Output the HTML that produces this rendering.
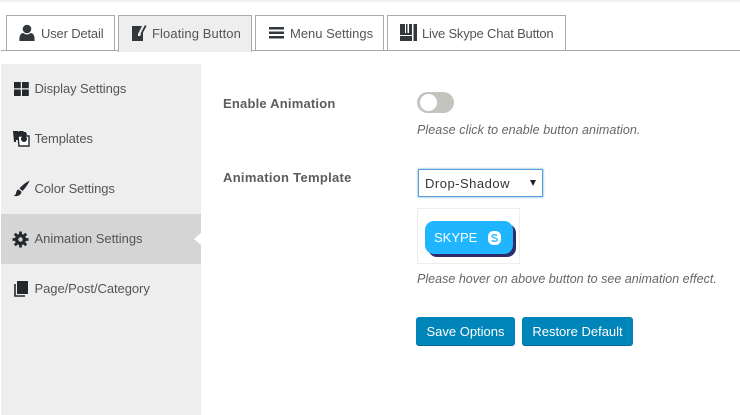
<!DOCTYPE html>
<html>
<head>
<meta charset="utf-8">
<style>
html,body{margin:0;padding:0;width:740px;height:415px;overflow:hidden;background:#fff;font-family:"Liberation Sans",sans-serif;color:#555}
.a{position:absolute;white-space:nowrap}
.tab{position:absolute;top:15px;height:34px;border:1px solid #aaa;border-bottom:none;box-sizing:content-box}
.t{position:absolute;white-space:nowrap;font-size:13px;line-height:18px;color:#555}
svg{position:absolute;display:block}
.btn{position:absolute;top:317px;height:28px;background:#0085ba;border-radius:3px;border-bottom:1px solid #006799;color:#fff;font-size:13px;line-height:29px;text-align:center}
.lab{position:absolute;font-size:13px;font-weight:bold;color:#5c5c5c;line-height:18px;white-space:nowrap}
.hint{position:absolute;font-size:12.5px;font-style:italic;color:#666;line-height:18px;white-space:nowrap}
</style>
</head>
<body>
<div class="a" style="left:0;top:0;width:740px;height:2px;background:#f1f1f1"></div>
<div class="a" style="left:1px;top:50px;width:739px;height:1px;background:#aaa"></div>

<div class="tab" style="left:6px;width:107px;background:#fff"></div>
<div class="tab" style="left:118px;width:132px;background:#eee;height:36px"></div>
<div class="tab" style="left:255px;width:127px;background:#fff"></div>
<div class="tab" style="left:387px;width:177px;background:#fff"></div>

<svg style="left:19px;top:24px" width="16" height="18" viewBox="0 0 16 18"><circle cx="8" cy="5" r="4.300" fill="#32373c"/><path d="M0.500 17c-.5-5 1-8 4-8 1 1 2 1.500 3.500 1.500S10.500 10 11.500 9c3 0 4.500 3 4 8z" fill="#32373c"/></svg>
<div class="t" style="left:41px;top:25px;letter-spacing:-.17px">User Detail</div>

<svg style="left:131px;top:23px" width="17" height="18" viewBox="0 0 17 18"><path d="M1 3h10L7 11v2h2l3-5v10H1z" fill="#32373c"/><path d="M9.500 10.500L14 2l1.500 1L11 11.500z" fill="#32373c"/></svg>
<div class="t" style="left:152px;top:25px;letter-spacing:.1px">Floating Button</div>

<svg style="left:269px;top:27px" width="15" height="12" viewBox="0 0 15 12"><rect y="0" width="15" height="2.500" fill="#32373c"/><rect y="4.500" width="15" height="2.500" fill="#32373c"/><rect y="9" width="15" height="2.500" fill="#32373c"/></svg>
<div class="t" style="left:290px;top:25px;letter-spacing:0">Menu Settings</div>

<svg style="left:400px;top:24px" width="17" height="17" viewBox="0 0 17 17"><path d="M0 0h5v9h1V0h1.500v9H9V0h3v11H0zM0 12h12v5H0zM13.500 0H17v17h-3.500z" fill="#32373c"/></svg>
<div class="t" style="left:422px;top:25px;letter-spacing:-.2px">Live Skype Chat Button</div>

<div class="a" style="left:1px;top:64px;width:200px;height:351px;background:#eee"></div>
<div class="a" style="left:1px;top:214px;width:200px;height:50px;background:#d5d5d5"></div>
<div class="a" style="left:194px;top:233px;width:0;height:0;border-top:6px solid transparent;border-bottom:6px solid transparent;border-right:7px solid #fff"></div>

<svg style="left:14px;top:82px" width="15" height="14" viewBox="0 0 15 14"><path d="M0 0h6.800v6.300H0zM8 0h6.800v6.300H8zM0 7.500h6.800V14H0zM8 7.500h6.800V14H8z" fill="#23282d"/></svg>
<div class="t" style="left:34.500px;top:80px;letter-spacing:-.09px">Display Settings</div>

<svg style="left:13px;top:130px" width="17" height="17" viewBox="0 0 17 17"><path d="M0 1h5v9H3v2H1z" fill="#23282d"/><path d="M4 3l2-2h4l1 1h2l1 3-8 3z" fill="#23282d"/><path d="M5 6h11v10H6z" fill="#fff" stroke="#23282d" stroke-width="1.400"/><circle cx="11" cy="9" r="3" fill="#23282d"/></svg>
<div class="t" style="left:34.500px;top:130px;letter-spacing:-.1px">Templates</div>

<svg style="left:13px;top:180px" width="17" height="17" viewBox="0 0 17 17"><path d="M16.500 0.500C14 2 9 5 6.500 8.500l3 2.500C12.500 8 15.500 3.500 16.500 0.500z" fill="#23282d"/><path d="M5.500 9.500C3 10 3.500 13 2.500 14.500c-.5.700-1.500 1-2 1 2 1.200 6 .8 7.500-2 .5-1 .4-1.600.2-2z" fill="#23282d"/></svg>
<div class="t" style="left:34.500px;top:180px;letter-spacing:-.1px">Color Settings</div>

<svg style="left:12px;top:231px" width="17" height="17" viewBox="0 0 17 17"><circle cx="8.500" cy="8.500" r="3.900" fill="none" stroke="#23282d" stroke-width="3.400"/><path d="M8.500 0.500v16M0.500 8.500h16M2.800 2.800l11.400 11.400M14.200 2.800L2.800 14.200" stroke="#23282d" stroke-width="2.800"/><circle cx="8.500" cy="8.500" r="2.200" fill="#d5d5d5"/></svg>
<div class="t" style="left:34.500px;top:230px;letter-spacing:-.02px">Animation Settings</div>

<svg style="left:14px;top:281px" width="14" height="16" viewBox="0 0 14 16"><path d="M3 0h11v13H3z" fill="#23282d"/><path d="M1 3v12h10" fill="none" stroke="#23282d" stroke-width="1.600"/></svg>
<div class="t" style="left:34.500px;top:280px;letter-spacing:-.06px">Page/Post/Category</div>

<div class="lab" style="left:223px;top:95px;letter-spacing:.2px">Enable Animation</div>
<div class="a" style="left:417px;top:92px;width:37px;height:21px;border-radius:11px;background:#c4c4bf"></div>
<div class="a" style="left:420px;top:94px;width:17px;height:17px;border-radius:50%;background:#fff"></div>
<div class="hint" style="left:417px;top:121px;letter-spacing:.08px">Please click to enable button animation.</div>

<div class="lab" style="left:223px;top:169px;letter-spacing:.3px">Animation Template</div>
<div class="a" style="left:418px;top:169px;width:123px;height:26px;border:1px solid #5b9dd9;box-shadow:0 0 2px rgba(30,140,190,.8);background:#fff"></div>
<div class="t" style="left:425px;top:175px;color:#32373c;letter-spacing:.5px">Drop-Shadow</div>
<div class="a" style="left:530px;top:180px;width:0;height:0;border-left:3.500px solid transparent;border-right:3.500px solid transparent;border-top:6px solid #222"></div>

<div class="a" style="left:417px;top:208px;width:101px;height:54px;border:1px solid #eee;background:#fff"></div>
<div class="a" style="left:425px;top:221px;width:88px;height:33px;border-radius:9px;background:#1fb6ff;box-shadow:3px 3px 0 #2d2d6b"></div>
<div class="a" style="left:434px;top:229px;font-size:13px;line-height:17px;color:#fff">SKYPE</div>
<svg style="left:488px;top:231px" width="13" height="14" viewBox="0 0 13 14"><rect x="0" y="0" width="13" height="14" rx="5.500" fill="#fff"/><path d="M9 4.700C8.300 3.700 4 3.200 4 5.200c0 2 5.200 1.300 5.200 3.500 0 2-4.500 1.800-5.400.5" fill="none" stroke="#1fb6ff" stroke-width="1.300"/></svg>

<div class="hint" style="left:417px;top:270px;letter-spacing:.02px">Please hover on above button to see animation effect.</div>

<div class="btn" style="left:416px;width:99px">Save Options</div>
<div class="btn" style="left:522px;width:111px">Restore Default</div>
</body>
</html>
